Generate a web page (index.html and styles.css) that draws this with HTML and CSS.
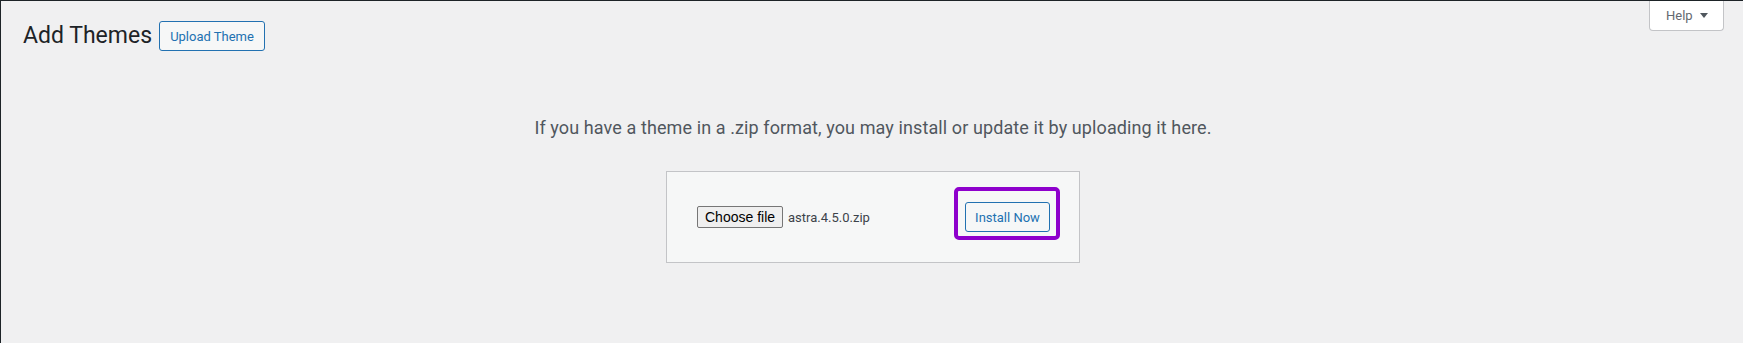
FILE: index.html
```html
<!DOCTYPE html>
<html lang="en">
<head>
<meta charset="utf-8">
<title>Add Themes</title>
<link rel="stylesheet" href="styles.css">
</head>
<body>
<div class="frame">
  <span class="menu-mark mark-a"></span>
  <span class="menu-mark mark-b"></span>
  <div class="screen-meta-links">
    <button class="help-tab" type="button">Help <span class="caret"></span></button>
  </div>
  <div class="wrap">
    <div class="title-row">
      <h1 class="page-title">Add Themes</h1>
      <a class="btn title-action" href="#">Upload Theme</a>
    </div>
    <div class="upload-theme">
      <p class="install-help">If you have a theme in a .zip format, you may install or update it by uploading it here.</p>
      <form class="upload-form">
        <div class="file-field">
          <span class="file-button">Choose file</span>
          <span class="file-name">astra.4.5.0.zip</span>
        </div>
        <div class="submit-wrap">
          <button class="btn install-btn" type="button">Install Now</button>
          <span class="highlight"></span>
        </div>
      </form>
    </div>
  </div>
</div>
</body>
</html>
```

FILE: styles.css
```css
html, body {
  margin: 0;
  padding: 0;
  background: #f0f0f1;
}
body {
  font-family: Roboto, "Noto Sans", sans-serif;
  color: #3c434a;
}
.frame {
  position: relative;
  border-top: 1px solid #1d2327;
  border-left: 1px solid #1d2327;
  box-sizing: border-box;
  height: 343px;
  overflow: hidden;
}
.menu-mark {
  position: absolute;
  left: -1px;
  width: 1px;
  background: #2271b1;
}
.mark-a { top: 205px; height: 10px; }
.mark-b { top: 229px; height: 11px; }

.screen-meta-links {
  float: right;
  margin-right: 19px;
}
.help-tab {
  display: flex;
  align-items: center;
  gap: 7px;
  height: 30px;
  box-sizing: border-box;
  width: 75px;
  padding: 0 0 1px 16px;
  margin: 0;
  background: #fff;
  border: 1px solid #c3c4c7;
  border-top: none;
  border-radius: 0 0 4px 4px;
  color: #646970;
  font-family: inherit;
  font-size: 13px;
  cursor: pointer;
}
.caret {
  width: 0;
  height: 0;
  border-left: 4px solid transparent;
  border-right: 4px solid transparent;
  border-top: 5px solid #50575e;
  margin-top: 1px;
}

.wrap {
  padding: 20px 20px 0 22px;
}
.title-row {
  display: flex;
  align-items: center;
  gap: 7px;
  height: 30px;
}
.page-title {
  margin: 0;
  font-size: 23px;
  font-weight: 400;
  line-height: 1.3;
  color: #1d2327;
}
.btn {
  display: inline-flex;
  align-items: center;
  justify-content: center;
  box-sizing: border-box;
  height: 30px;
  padding: 0 10px;
  border: 1px solid #2271b1;
  border-radius: 3px;
  background: #f6f7f7;
  color: #2271b1;
  font-family: inherit;
  font-size: 13px;
  text-decoration: none;
  white-space: nowrap;
}
.title-action {
  width: 106px;
  padding: 0;
}

.upload-theme {
  text-align: center;
}
.install-help {
  margin: 0;
  padding: 63px 0 30px;
  font-size: 18px;
  line-height: 27px;
  letter-spacing: 0.1px;
  color: #50575e;
}
.upload-form {
  display: inline-flex;
  align-items: center;
  box-sizing: border-box;
  width: 414px;
  padding: 30px;
  margin: 0;
  background: #f6f7f7;
  border: 1px solid #c3c4c7;
  text-align: left;
}
.file-field {
  display: flex;
  align-items: center;
  gap: 5px;
  width: 268px;
  flex: none;
}
.file-button {
  display: inline-flex;
  align-items: center;
  box-sizing: border-box;
  height: 22px;
  padding: 0 7px 1px 7px;
  background: #efefef;
  border: 1px solid #767676;
  border-radius: 2px;
  font-family: "Liberation Sans", Arial, sans-serif;
  font-size: 14px;
  color: #000;
}
.file-name {
  font-size: 13px;
  color: #3c434a;
}
.submit-wrap {
  position: relative;
  flex: none;
}
.install-btn {
  width: 85px;
  padding: 0;
}
.highlight {
  position: absolute;
  top: -15px;
  left: -11px;
  width: 106px;
  height: 53px;
  box-sizing: border-box;
  border: 4px solid #8e00cc;
  border-radius: 5px;
  pointer-events: none;
}
```
